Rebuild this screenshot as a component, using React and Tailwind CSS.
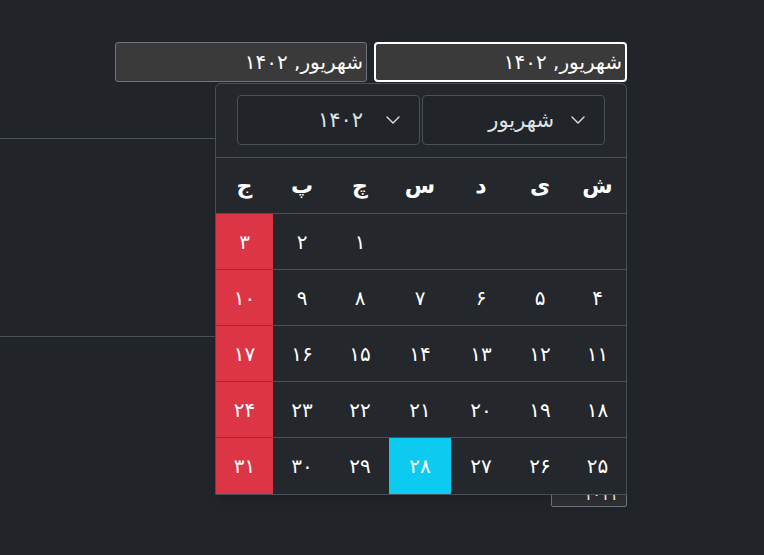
import React from "react";
import { ChevronDown } from "lucide-react";

const weekDays = ["ش", "ی", "د", "س", "چ", "پ", "ج"];

const toFa = (n) => String(n).replace(/\d/g, (d) => "۰۱۲۳۴۵۶۷۸۹"[d]);

// 1402 Shahrivar starts on a Wednesday (چ)
const buildWeeks = () => {
  const cells = [null, null, null, null];
  for (let d = 1; d <= 31; d++) cells.push(d);
  const weeks = [];
  for (let i = 0; i < cells.length; i += 7) weeks.push(cells.slice(i, i + 7));
  return weeks;
};

const colWidths = "grid-cols-[57px_58px_60px_62px_58px_58px_57px]";

const Select = ({ label, gap }) => (
  <div
    className={`h-[50px] w-[183px] rounded-[4px] border border-[#495057] bg-[#212529] flex items-center pr-[14px] ${gap}`}
  >
    <ChevronDown className="h-[24px] w-[24px] text-[#dee2e6]" strokeWidth={1.4} />
    <span className="text-[21px] leading-none text-[#dee2e6]">{label}</span>
  </div>
);

const DatePopup = () => {
  const weeks = buildWeeks();
  const today = 28;

  return (
    <div
      dir="rtl"
      className="absolute left-[215px] top-[83px] w-[412px] rounded-t-md border border-[#495057] bg-[#24272b] shadow-lg"
    >
      <div className="h-[74px] border-b border-[#495057] pt-[11px] pr-[21px] pl-[20px]">
        <div className="flex gap-[2px]">
          <Select label="شهریور" gap="gap-[12px]" />
          <Select label="۱۴۰۲" gap="gap-[18px]" />
        </div>
      </div>

      <div className={`grid ${colWidths} h-[56px] border-b border-[#495057]`}>
        {weekDays.map((w) => (
          <div
            key={w}
            className="flex items-center justify-center text-[22px] font-bold text-white"
          >
            {w}
          </div>
        ))}
      </div>

      {weeks.map((week, wi) => (
        <div
          key={wi}
          className={`grid ${colWidths} h-[56px] ${
            wi < weeks.length - 1 ? "border-b border-[#495057]" : ""
          }`}
        >
          {week.map((day, di) => {
            const friday = di === 6;
            const isToday = day === today;
            let bg = "";
            if (friday) bg = "bg-[#dc3545]";
            if (isToday) bg = "bg-[#0dcaf0]";
            return (
              <div
                key={di}
                className={`flex items-center justify-center text-[20px] text-white ${bg}`}
              >
                {day ? toFa(day) : ""}
              </div>
            );
          })}
        </div>
      ))}
    </div>
  );
};

export default function App() {
  return (
    <div className="relative min-h-screen bg-[#212529] font-['DejaVu_Sans',sans-serif] overflow-hidden">
      <div dir="ltr" className="flex gap-[7px] pt-[42px] pl-[115px]">
        <div
          dir="rtl"
          className="h-[40px] w-[252px] rounded-[3px] border border-[#6c757d] bg-[#3a3a3a] flex items-center px-[3px] text-[20px] text-white"
        >
          شهریور, ۱۴۰۲
        </div>
        <div
          dir="rtl"
          className="h-[40px] w-[253px] rounded-[4px] border-2 border-white bg-[#3a3a3a] flex items-center px-[3px] text-[20px] text-white"
        >
          شهریور, ۱۴۰۲
        </div>
      </div>

      <div className="mt-[56px] h-[199px] w-[420px] border-y border-[#495057]" />

      <div
        dir="rtl"
        className="mt-[146px] ml-[551px] h-[24px] w-[76px] rounded-[2px] border border-[#6c757d] bg-[#2e3033] flex items-center px-[8px] text-[16px] text-white"
      >
        ۱۰۱۱
      </div>

      <DatePopup />
    </div>
  );
}
